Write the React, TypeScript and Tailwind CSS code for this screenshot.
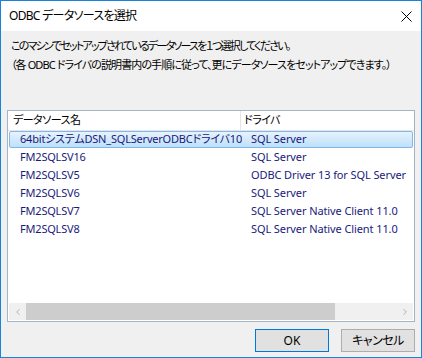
import { ChevronLeft, ChevronRight } from "lucide-react";

const rows = [
  { name: "64bitシステムDSN_SQLServerODBCドライバ10", driver: "SQL Server", selected: true },
  { name: "FM2SQLSV16", driver: "SQL Server" },
  { name: "FM2SQLSV5", driver: "ODBC Driver 13 for SQL Server" },
  { name: "FM2SQLSV6", driver: "SQL Server" },
  { name: "FM2SQLSV7", driver: "SQL Server Native Client 11.0" },
  { name: "FM2SQLSV8", driver: "SQL Server Native Client 11.0" },
];

export default function App() {
  return (
    <div className="w-[422px] h-[358px] flex flex-col border border-[#1883d7] bg-[#f0f0f0] text-[12px] text-black font-['Noto_Sans','Noto_Sans_CJK_JP',sans-serif] [font-feature-settings:'palt'] overflow-hidden">
      {/* title bar */}
      <div className="h-[30px] bg-white flex items-center justify-between pl-[8px] shrink-0">
        <span className="tracking-[-0.7px]">ODBC データソースを選択</span>
        <svg width="11" height="11" viewBox="0 0 11 11" className="mr-[9px]">
          <path d="M0.5 0.5 L10.5 10.5 M10.5 0.5 L0.5 10.5" stroke="#000" strokeWidth="1" />
        </svg>
      </div>

      {/* message */}
      <div className="pl-[10px] pt-[5px] leading-[19px] text-[11px]">
        <p className="tracking-[-1.8px]">このマシンでセットアップされているデータソースを１つ選択してください。</p>
        <p className="tracking-[-0.9px]">（各 ODBC ドライバの説明書内の手順に従って、更にデータソースをセットアップできます。）</p>
      </div>

      {/* list */}
      <div className="mt-[36px] ml-[6px] w-[408px] h-[212px] border border-[#a3b4c6] bg-white flex flex-col">
        <div className="h-[20px] flex border-b border-[#e5e5e5] shrink-0 text-[11px] tracking-[-0.5px]">
          <div className="w-[233px] shrink-0 border-r border-[#e5e5e5] pl-[5px] flex items-center">データソース名</div>
          <div className="pl-[3px] flex items-center">ドライバ</div>
        </div>
        <div className="flex-1 pl-[1px] pr-[1px] text-[11px]">
          {rows.map((r) => (
            <div
              key={r.name}
              className={
                r.selected
                  ? "h-[17px] mb-[1px] flex items-center rounded-[2px] border border-[#84b7e8] bg-gradient-to-b from-[#e6f3fd] to-[#bde0fb] text-[#1a1a7a]"
                  : "h-[17px] mb-[1px] flex items-center border border-transparent text-[#1a1a7a]"
              }
            >
              <div className="w-[232px] shrink-0 pl-[10px] whitespace-nowrap overflow-hidden tracking-[-0.2px]">{r.name}</div>
              <div className="pl-[9px] whitespace-nowrap tracking-[-0.1px]">{r.driver}</div>
            </div>
          ))}
        </div>
        <div className="h-[17px] mb-[1px] mx-[1px] flex items-center bg-[#f0f0f0] shrink-0">
          <div className="w-[17px] flex justify-center text-[#a3a3a3]">
            <ChevronLeft size={10} strokeWidth={2} />
          </div>
          <div className="w-[309px] h-full bg-[#cdcdcd]" />
          <div className="flex-1" />
          <div className="w-[17px] flex justify-center text-[#a3a3a3]">
            <ChevronRight size={10} strokeWidth={2} />
          </div>
        </div>
      </div>

      {/* buttons */}
      <div className="flex justify-end gap-[12px] pr-[6px] mt-[7px]">
        <button className="w-[74px] h-[23px] border border-[#0078d7] bg-[#e1e1e1] text-[12px]">OK</button>
        <button className="w-[74px] h-[23px] border border-[#adadad] bg-[#e1e1e1] text-[12px] tracking-[-0.5px]">キャンセル</button>
      </div>
    </div>
  );
}
